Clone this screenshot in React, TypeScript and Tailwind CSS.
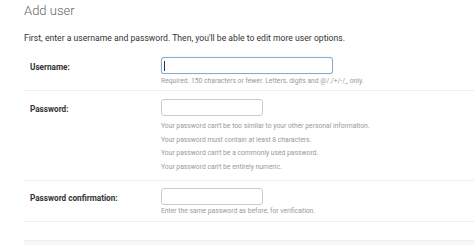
import React from "react";

export default function App() {
  return (
    <div className="w-[474px] h-[245px] overflow-hidden bg-white pl-[24px] font-['Roboto',sans-serif]">
      <h1 className="pt-[3px] text-[13px] leading-[16px] font-light text-[#666]">Add user</h1>
      <p className="mt-[13px] text-[8.65px] leading-[12px] text-[#333]">
        First, enter a username and password. Then, you'll be able to edit more user options.
      </p>
      <div className="mt-[6px]">
        <div className="flex border-b border-[#eee] pt-[7px] pb-[5px] pl-[6px]">
          <label className="w-[131px] shrink-0 pt-[4px] text-[8.2px] leading-[12px] font-bold text-[#333]">Username:</label>
          <div>
            <div className="flex h-[17px] w-[172px] items-center rounded-[3px] border border-[#86acd2] bg-white pl-[2px] shadow-[0_0_1px_#a9c6e3]">
              <span className="block h-[10px] w-[1px] bg-[#333]" />
            </div>
            <div className="mt-[3px] text-[6.75px] leading-[8px] text-[#999]">
              Required. 150 characters or fewer. Letters, digits and @/./+/-/_ only.
            </div>
          </div>
        </div>
        <div className="flex border-b border-[#eee] pt-[8px] pb-[6px] pl-[6px]">
          <label className="w-[131px] shrink-0 pt-[4px] text-[8.2px] leading-[12px] font-bold text-[#333]">Password:</label>
          <div>
            <div className="h-[17px] w-[102px] rounded-[3px] border border-[#ccc] bg-white" />
            <ul className="mt-[4px] text-[6.75px] leading-[13.5px] text-[#999]">
              <li>Your password can't be too similar to your other personal information.</li>
              <li>Your password must contain at least 8 characters.</li>
              <li>Your password can't be a commonly used password.</li>
              <li>Your password can't be entirely numeric.</li>
            </ul>
          </div>
        </div>
        <div className="flex border-b border-[#eee] pt-[7px] pb-[6px] pl-[6px]">
          <label className="w-[131px] shrink-0 pt-[4px] text-[8.2px] leading-[12px] font-bold text-[#333]">Password confirmation:</label>
          <div>
            <div className="h-[17px] w-[102px] rounded-[3px] border border-[#ccc] bg-white" />
            <div className="mt-[2px] text-[6.75px] leading-[8px] text-[#999]">
              Enter the same password as before, for verification.
            </div>
          </div>
        </div>
      </div>
      <div className="mt-[18px] h-[20px] border-t border-[#eee] bg-[#f8f8f8]" />
    </div>
  );
}
